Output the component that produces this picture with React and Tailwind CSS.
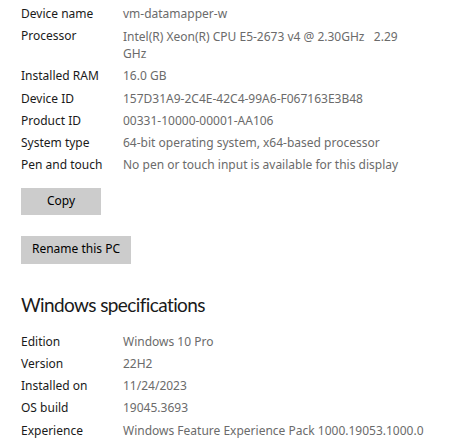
import React from "react";

function Row({ label, children }) {
  return (
    <div className="flex">
      <div className="w-[102px] shrink-0 text-[#1a1a1a]">{label}</div>
      <div className="text-[#6b6b6b]">{children}</div>
    </div>
  );
}

export default function App() {
  return (
    <div className="w-[450px] h-[440px] bg-white overflow-hidden pl-[21px] pt-[3px] text-[12px] leading-[22.25px] font-['Noto_Sans',sans-serif]">
      <Row label="Device name">vm-datamapper-w</Row>
      <div className="flex">
        <div className="w-[102px] shrink-0 text-[#1a1a1a]">Processor</div>
        <div className="text-[#6b6b6b] leading-[17.75px] pt-[2.25px] pb-[2.25px] whitespace-pre">
          {"Intel(R) Xeon(R) CPU E5-2673 v4 @ 2.30GHz   2.29"}
          <br />
          GHz
        </div>
      </div>
      <Row label="Installed RAM">16.0 GB</Row>
      <Row label="Device ID">157D31A9-2C4E-42C4-99A6-F067163E3B48</Row>
      <Row label="Product ID">00331-10000-00001-AA106</Row>
      <Row label="System type">64-bit operating system, x64-based processor</Row>
      <Row label="Pen and touch">No pen or touch input is available for this display</Row>
      <div className="mt-[11px] flex flex-col items-start gap-[21px]">
        <button className="w-[80px] h-[27px] bg-[#cccccc] text-[#000] text-[12px]">Copy</button>
        <button className="w-[110px] h-[28px] bg-[#cccccc] text-[#000] text-[12px]">Rename this PC</button>
      </div>
      <h2 className="mt-[27px] text-[19px] leading-[28px] tracking-[-0.6px] text-[#1a1a1a] font-['Lato',sans-serif]">Windows specifications</h2>
      <div className="mt-[12px]">
        <Row label="Edition">Windows 10 Pro</Row>
        <Row label="Version">22H2</Row>
        <Row label="Installed on">11/24/2023</Row>
        <Row label="OS build">19045.3693</Row>
        <Row label="Experience">Windows Feature Experience Pack 1000.19053.1000.0</Row>
      </div>
    </div>
  );
}
